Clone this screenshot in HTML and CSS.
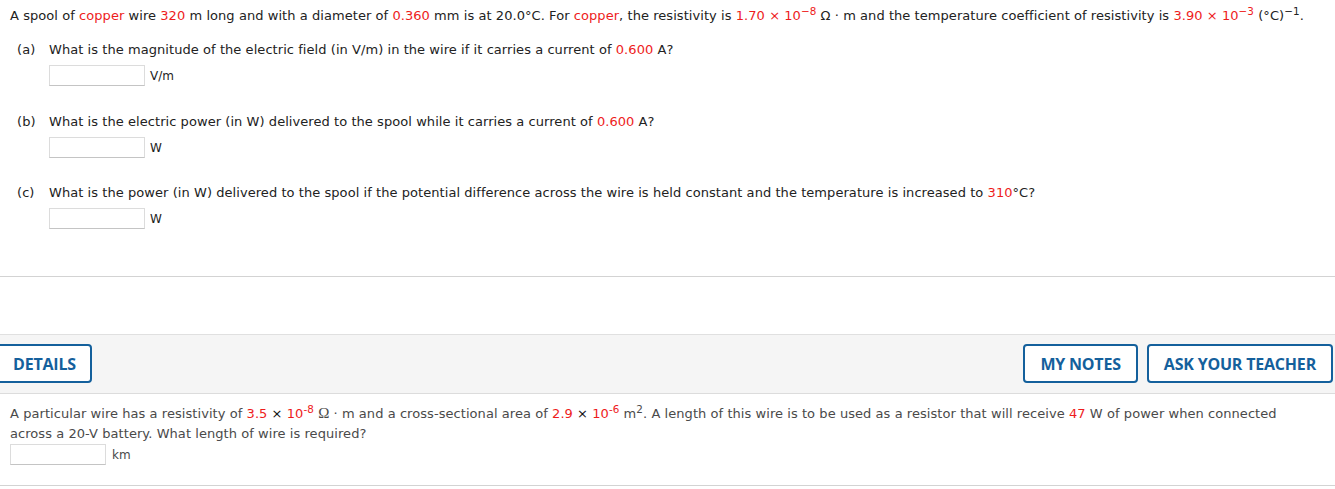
FILE: index.html
```html
<!DOCTYPE html>
<html>
<head>
<meta charset="utf-8">
<link rel="stylesheet" href="styles.css">
</head>
<body>
<section class="q1">
  <p class="stem">A spool of <span class="red">copper</span> wire <span class="red">320</span> m long and with a diameter of <span class="red">0.360</span> mm is at 20.0°C. For <span class="red">copper</span>, the resistivity is <span class="red">1.70 × 10<sup>−8</sup></span> Ω · m and the temperature coefficient of resistivity is <span class="red">3.90 × 10<sup>−3</sup></span> (°C)<sup>−1</sup>.</p>
  <div class="part pa">
    <span class="label">(a)</span>
    <div class="part-body">
      <p class="ptext">What is the magnitude of the electric field (in V/m) in the wire if it carries a current of <span class="red">0.600</span> A?</p>
      <div class="answer"><span class="input"></span><span class="unit">V/m</span></div>
    </div>
  </div>
  <div class="part pb">
    <span class="label">(b)</span>
    <div class="part-body">
      <p class="ptext">What is the electric power (in W) delivered to the spool while it carries a current of <span class="red">0.600</span> A?</p>
      <div class="answer"><span class="input"></span><span class="unit">W</span></div>
    </div>
  </div>
  <div class="part pc">
    <span class="label">(c)</span>
    <div class="part-body">
      <p class="ptext">What is the power (in W) delivered to the spool if the potential difference across the wire is held constant and the temperature is increased to <span class="red">310</span>°C?</p>
      <div class="answer"><span class="input"></span><span class="unit">W</span></div>
    </div>
  </div>
</section>
<div class="rule"></div>
<div class="toolbar">
  <button class="btn details">DETAILS</button>
  <div class="right">
    <button class="btn">MY NOTES</button>
    <button class="btn">ASK YOUR TEACHER</button>
  </div>
</div>
<section class="q2">
  <p class="stem2">A particular wire has a resistivity of <span class="red">3.5</span> <span class="times">×</span> <span class="red">10<sup>-8</sup></span> <span class="omega">Ω</span> · m and a cross-sectional area of <span class="red">2.9</span> <span class="times">×</span> <span class="red">10<sup>-6</sup></span> m<sup>2</sup>. A length of this wire is to be used as a resistor that will receive <span class="red">47</span> W of power when connected across a 20-V battery. What length of wire is required?</p>
  <div class="answer2"><span class="input"></span><span class="unit">km</span></div>
</section>
<div class="rule bottom"></div>
</body>
</html>
```
FILE: styles.css
```css
html, body {
  margin: 0;
  padding: 0;
  background: #fff;
}
body {
  font-family: "DejaVu Sans", Verdana, sans-serif;
  font-size: 13px;
  line-height: 20px;
  color: #222;
  letter-spacing: 0.06px;
}
p { margin: 0; }
.red { color: #ee1c1c; }
sup {
  font-size: 0.8em;
  line-height: 0;
  vertical-align: 0.45em;
}
.q1 {
  padding: 6px 10px 0 10px;
}
.part {
  display: flex;
  padding-left: 7px;
}
.pa { margin-top: 14px; }
.pb { margin-top: 26px; }
.pc { margin-top: 25px; }
.label {
  width: 32px;
  flex: none;
}
.answer {
  display: flex;
  align-items: center;
  margin-top: 5px;
}
.input {
  display: inline-block;
  width: 94px;
  height: 19px;
  border: 1px solid #dcdcdc;
  border-bottom-color: #c4c4c4;
  background: #fff;
  box-sizing: content-box;
}
.unit {
  margin-left: 5px;
  font-size: 12px;
}
.rule {
  height: 1px;
  background: #d3d3d3;
  margin-top: 47px;
}
.toolbar {
  margin-top: 57px;
  background: #f5f5f5;
  border-top: 1px solid #e0e0e0;
  border-bottom: 1px solid #dcdcdc;
  height: 58px;
  box-sizing: content-box;
  display: flex;
  align-items: flex-start;
  justify-content: space-between;
  padding-right: 2px;
}
.toolbar .btn { margin-top: 9px; }
.right {
  display: flex;
  gap: 9px;
}
.btn {
  font-family: "Open Sans", sans-serif;
  font-weight: 700;
  font-size: 16px;
  color: #14609c;
  background: #fff;
  border: 2px solid #14609c;
  border-radius: 4px;
  height: 39px;
  padding: 0 15px;
  letter-spacing: -0.2px;
}
.details {
  margin-left: -4px;
  padding-left: 15px;
  padding-right: 14px;
}
.q2 {
  padding: 9px 40px 0 10px;
  color: #4a4a4a;
}
.times { color: #111; }
.omega {
  font-family: "Liberation Serif", "Times New Roman", serif;
  font-size: 15px;
}
.answer2 {
  display: flex;
  align-items: center;
}
.answer2 .unit { margin-left: 6px; }
.rule.bottom { margin-top: 20px; }
```
